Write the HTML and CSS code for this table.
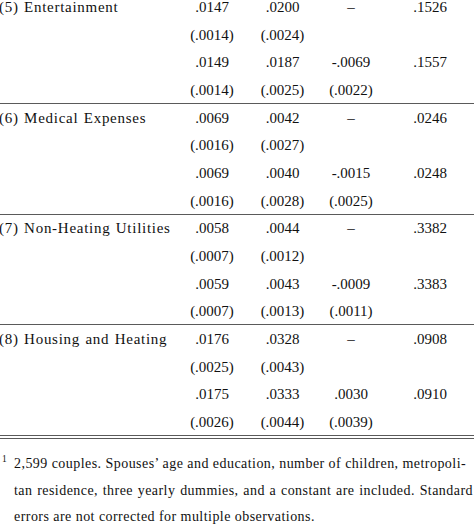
FILE: index.html
```html
<!DOCTYPE html>
<html>
<head>
<meta charset="utf-8">
<link rel="stylesheet" href="styles.css">
</head>
<body>
<div class="table">
  <div class="section">
    <div class="row"><span class="label">(5) Entertainment</span><span>.0147</span><span>.0200</span><span>–</span><span>.1526</span></div>
    <div class="row"><span class="label"></span><span>(.0014)</span><span>(.0024)</span><span></span><span></span></div>
    <div class="row"><span class="label"></span><span>.0149</span><span>.0187</span><span>-.0069</span><span>.1557</span></div>
    <div class="row"><span class="label"></span><span>(.0014)</span><span>(.0025)</span><span>(.0022)</span><span></span></div>
  </div>
  <div class="section">
    <div class="row"><span class="label">(6) Medical Expenses</span><span>.0069</span><span>.0042</span><span>–</span><span>.0246</span></div>
    <div class="row"><span class="label"></span><span>(.0016)</span><span>(.0027)</span><span></span><span></span></div>
    <div class="row"><span class="label"></span><span>.0069</span><span>.0040</span><span>-.0015</span><span>.0248</span></div>
    <div class="row"><span class="label"></span><span>(.0016)</span><span>(.0028)</span><span>(.0025)</span><span></span></div>
  </div>
  <div class="section">
    <div class="row"><span class="label">(7) Non-Heating Utilities</span><span>.0058</span><span>.0044</span><span>–</span><span>.3382</span></div>
    <div class="row"><span class="label"></span><span>(.0007)</span><span>(.0012)</span><span></span><span></span></div>
    <div class="row"><span class="label"></span><span>.0059</span><span>.0043</span><span>-.0009</span><span>.3383</span></div>
    <div class="row"><span class="label"></span><span>(.0007)</span><span>(.0013)</span><span>(.0011)</span><span></span></div>
  </div>
  <div class="section">
    <div class="row"><span class="label">(8) Housing and Heating</span><span>.0176</span><span>.0328</span><span>–</span><span>.0908</span></div>
    <div class="row"><span class="label"></span><span>(.0025)</span><span>(.0043)</span><span></span><span></span></div>
    <div class="row"><span class="label"></span><span>.0175</span><span>.0333</span><span>.0030</span><span>.0910</span></div>
    <div class="row"><span class="label"></span><span>(.0026)</span><span>(.0044)</span><span>(.0039)</span><span></span></div>
  </div>
</div>
<div class="rule2"></div>
<div class="notes">
  <sup class="mark">1</sup>
  <div class="nline l1">2,599 couples. Spouses’ age and education, number of children, metropoli-</div>
  <div class="nline l2">tan residence, three yearly dummies, and a constant are included. Standard</div>
  <div class="nline l3">errors are not corrected for multiple observations.</div>
</div>
</body>
</html>
```

FILE: styles.css
```css
html, body {
  margin: 0;
  padding: 0;
  background: #fff;
  overflow: hidden;
}
body {
  width: 474px;
  height: 529px;
  font-family: "Liberation Serif", "Times New Roman", serif;
  color: #111;
}
.table {
  margin-top: -6.67px;
}
.section {
  padding-top: 0.83px;
  border-bottom: 1px solid #5a5a5a;
}
.row {
  display: grid;
  grid-template-columns: 177px 70px 71px 66px 92px;
  height: 27.67px;
  line-height: 27.67px;
  font-size: 15px;
  white-space: nowrap;
}
.row:last-child {
  margin-bottom: -1.83px;
}
.row span {
  text-align: center;
}
.row .label {
  text-align: left;
  margin-left: -1px;
  letter-spacing: 0.72px;
  word-spacing: 1px;
}
.rule2 {
  margin-top: 2px;
  height: 1px;
  background: #5a5a5a;
}
.notes {
  position: relative;
  margin-top: 12px;
  padding-left: 14px;
  font-size: 14px;
  line-height: 26.7px;
}
.mark {
  position: absolute;
  left: 2px;
  top: 4px;
  font-size: 9.5px;
  line-height: 1;
}
.nline {
  white-space: nowrap;
  text-align: justify;
  text-align-last: justify;
  letter-spacing: 0.45px;
}
.l1 { width: 452px; }
.l2 { width: 459px; }
.l3 { text-align: left; text-align-last: left; }
```
